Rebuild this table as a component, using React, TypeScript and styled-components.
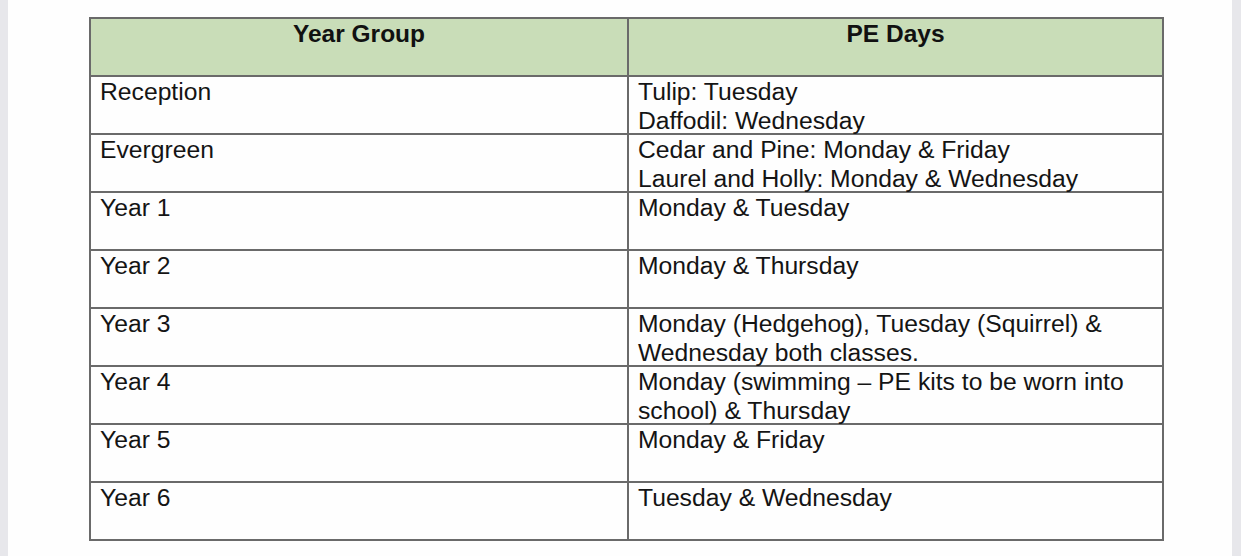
import styled, { createGlobalStyle } from "styled-components";

const GlobalStyle = createGlobalStyle`
  html, body {
    margin: 0;
    padding: 0;
    background: #e7e7eb;
  }
  body {
    font-family: "Liberation Sans", Arial, sans-serif;
    color: #111;
  }
`;

const Page = styled.div`
  margin: 0 9px 0 8px;
  min-height: 556px;
  background: #fefefe;
  padding: 17px 0 0 81px;
  box-sizing: border-box;
`;

const Table = styled.table`
  border-collapse: collapse;
  width: 1075px;
  table-layout: fixed;
`;

const HeadCell = styled.th`
  background: #c9ddb8;
  border: 2px solid #6a6a6a;
  height: 58px;
  box-sizing: border-box;
  padding: 0 10px;
  vertical-align: top;
  font-size: 24.5px;
  line-height: 29px;
  font-weight: 700;
  text-align: center;
  color: #111;
`;

const Cell = styled.td`
  border: 2px solid #6a6a6a;
  height: 58px;
  box-sizing: border-box;
  padding: 0 9px;
  vertical-align: top;
  font-size: 24.7px;
  line-height: 29px;
  color: #141414;
`;

const CellBody = styled.div`
  height: 50px;
  overflow: visible;
  white-space: nowrap;
`;

const rows: { group: string; days: string[] }[] = [
  { group: "Reception", days: ["Tulip: Tuesday", "Daffodil: Wednesday"] },
  { group: "Evergreen", days: ["Cedar and Pine: Monday & Friday", "Laurel and Holly: Monday & Wednesday"] },
  { group: "Year 1", days: ["Monday & Tuesday"] },
  { group: "Year 2", days: ["Monday & Thursday"] },
  { group: "Year 3", days: ["Monday (Hedgehog), Tuesday (Squirrel) &", "Wednesday both classes."] },
  { group: "Year 4", days: ["Monday (swimming \u2013 PE kits to be worn into", "school) & Thursday"] },
  { group: "Year 5", days: ["Monday & Friday"] },
  { group: "Year 6", days: ["Tuesday & Wednesday"] },
];

const App = () => {
  return (
    <>
      <GlobalStyle />
      <Page>
        <Table>
          <colgroup>
            <col style={{ width: 538 }} />
            <col />
          </colgroup>
          <thead>
            <tr>
              <HeadCell>Year Group</HeadCell>
              <HeadCell>PE Days</HeadCell>
            </tr>
          </thead>
          <tbody>
            {rows.map((r) => (
              <tr key={r.group}>
                <Cell>
                  <CellBody>{r.group}</CellBody>
                </Cell>
                <Cell>
                  <CellBody>
                    {r.days.map((d, i) => (
                      <div key={i}>{d}</div>
                    ))}
                  </CellBody>
                </Cell>
              </tr>
            ))}
          </tbody>
        </Table>
      </Page>
    </>
  );
};

export default App;
